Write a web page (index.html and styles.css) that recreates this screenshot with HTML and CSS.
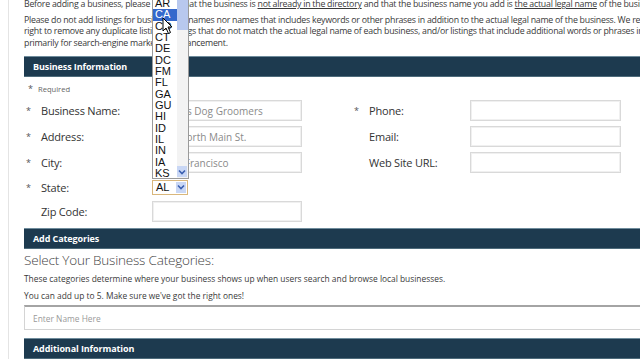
FILE: index.html
```html
<!DOCTYPE html>
<html lang="en">
<head>
    <meta charset="UTF-8">
    <title>Add a Business</title>
    <link rel="stylesheet" href="styles.css">
</head>
<body>
    <div class="page">
        <p class="intro intro-first">Before adding a business, please ensure that the business is <u>not already in the directory</u> and that the business name you add is <u>the actual legal name</u> of the business.</p>
        <p class="intro">Please do not add listings for business nicknames nor names that includes keywords or other phrases in addition to the actual legal name of the business. We reserve the<br>right to remove any duplicate listings, listings that do not match the actual legal name of each business, and/or listings that include additional words or phrases intended<br>primarily for search-engine marketing enhancement.</p>

        <div class="bar">Business Information</div>
        <p class="required"><span class="star">*</span> Required</p>

        <div class="fields">
            <span class="star">*</span>
            <label class="label">Business Name:</label>
            <input class="field" type="text" value="Max's Dog Groomers">
            <span></span>
            <span class="star">*</span>
            <label class="label">Phone:</label>
            <input class="field" type="text">

            <span class="star">*</span>
            <label class="label">Address:</label>
            <input class="field" type="text" value="10 North Main St.">
            <span></span>
            <span></span>
            <label class="label">Email:</label>
            <input class="field" type="text">

            <span class="star">*</span>
            <label class="label">City:</label>
            <input class="field" type="text" value="San Francisco">
            <span></span>
            <span></span>
            <label class="label">Web Site URL:</label>
            <input class="field" type="text">

            <span class="star">*</span>
            <label class="label">State:</label>
            <div class="state-cell">
                <div class="state-select">
                    <span>AL</span>
                    <span class="arrow-btn">
                        <svg width="8" height="6" viewBox="0 0 8 6"><path d="M1 1.5 L4 4.5 L7 1.5" fill="none" stroke="#3a5fb0" stroke-width="1.6"/></svg>
                    </span>
                </div>
            </div>
            <span></span><span></span><span></span><span></span>

            <span></span>
            <label class="label">Zip Code:</label>
            <input class="field" type="text">
            <span></span><span></span><span></span><span></span>
        </div>

        <div class="bar bar-cats">Add Categories</div>
        <h3 class="cat-title">Select Your Business Categories:</h3>
        <p class="cat-note">These categories determine where your business shows up when users search and browse local businesses.</p>
        <p class="cat-note cat-last">You can add up to 5. Make sure we've got the right ones!</p>
        <input class="cat-input" type="text" placeholder="Enter Name Here">

        <div class="bar bar-extra">Additional Information</div>

        <!-- open state list, drawn over the form -->
        <div class="state-list">
            <ul>
                <li>AR</li>
                <li class="picked">CA</li>
                <li>CO</li>
                <li>CT</li>
                <li>DE</li>
                <li>DC</li>
                <li>FM</li>
                <li>FL</li>
                <li>GA</li>
                <li>GU</li>
                <li>HI</li>
                <li>ID</li>
                <li>IL</li>
                <li>IN</li>
                <li>IA</li>
                <li>KS</li>
            </ul>
            <div class="scroll">
                <div class="thumb"></div>
                <div class="arrow-btn down">
                    <svg width="8" height="6" viewBox="0 0 8 6"><path d="M1 1.5 L4 4.5 L7 1.5" fill="none" stroke="#3a5fb0" stroke-width="1.6"/></svg>
                </div>
            </div>
        </div>
        <svg class="cursor" width="12" height="18" viewBox="0 0 12 18"><path d="M1 1 L1 14 L4 11 L6.5 16.5 L8.5 15.5 L6 10 L10 10 Z" fill="#fff" stroke="#000" stroke-width="1"/></svg>
    </div>
</body>
</html>
```

FILE: styles.css
```css
html, body {
    margin: 0;
    overflow: hidden;
    background: #fff;
}

body {
    font-family: "Open Sans", "Noto Sans", sans-serif;
    color: #3a3a3a;
}

.page {
    position: relative;
    width: 700px;
    min-height: 360px;
    margin-left: 8px;
    padding-left: 15px;
    border-left: 1px solid #e4e4e4;
}

.intro {
    margin: 0 0 4px 0;
    font-size: 8.8px;
    line-height: 11.5px;
    letter-spacing: -0.25px;
    white-space: nowrap;
}

.intro-first {
    margin-top: -1px;
}

.bar {
    height: 19px;
    margin-top: 7px;
    padding-left: 9px;
    background: #1d3a4f;
    border-top: 1px solid #6f8c9c;
    border-bottom: 1px solid #4e6b7b;
    color: #fff;
    font-size: 9px;
    font-weight: 700;
    line-height: 19px;
    letter-spacing: -0.1px;
}

.required {
    margin: 6px 0 5px 0;
    font-size: 7.6px;
    line-height: 12px;
    color: #666;
}

.required .star {
    margin: 0 3px 0 2px;
}

.star {
    padding-left: 2px;
    font-size: 9px;
    color: #555;
}

.fields {
    display: grid;
    grid-template-columns: 17px 111px 150px 50px 17px 101px 151px;
    grid-template-rows: 21px 21px 21px 18px 21px;
    row-gap: 5px;
    align-items: center;
}

.label {
    font-size: 11px;
    letter-spacing: -0.2px;
    color: #333;
}

.field {
    box-sizing: border-box;
    width: 100%;
    height: 21px;
    margin: 0;
    padding: 0 8px 0 12px;
    border: 1px solid #d9d9d9;
    box-shadow: inset 0 0 0 1px #f0f0f0;
    font-family: "Open Sans", sans-serif;
    font-size: 10px;
    color: #8a8a8a;
    outline: none;
}

.state-cell {
    display: flex;
    align-items: center;
}

.state-select {
    display: flex;
    align-items: center;
    justify-content: space-between;
    box-sizing: border-box;
    width: 36px;
    height: 15px;
    padding: 0 1px 0 3px;
    border: 1px solid #d9b77c;
    font-family: "Liberation Sans", Arial, sans-serif;
    font-size: 11px;
    color: #111;
}

.arrow-btn {
    display: flex;
    align-items: center;
    justify-content: center;
    width: 10px;
    height: 11px;
    background: #c9d7f5;
}

.bar-cats {
    margin-top: 6px;
}

.cat-title {
    margin: 1px 0 0 0;
    font-size: 13.5px;
    font-weight: 300;
    line-height: 20px;
    color: #444;
    letter-spacing: -0.2px;
}

.cat-note {
    margin: 3px 0 5px 0;
    font-size: 8.4px;
    line-height: 12px;
    color: #3a3a3a;
    white-space: nowrap;
}

.cat-note + .cat-note {
    margin-top: 0;
}

.cat-last {
    margin-bottom: 3px;
}

.cat-input {
    display: block;
    box-sizing: border-box;
    width: 100%;
    height: 25px;
    margin: 0;
    padding: 0 8px;
    border: 1px solid #d4d4d4;
    border-top: 2px solid #a4a4a4;
    font-family: "Open Sans", sans-serif;
    font-size: 8.4px;
    outline: none;
}

.cat-input::placeholder {
    color: #9a9a9a;
}

.bar-extra {
    margin-top: 8px;
}

/* open dropdown */
.state-list {
    position: absolute;
    left: 143px;
    top: -1px;
    display: flex;
    width: 35px;
    height: 180px;
    background: #fff;
    border: 1px solid #9a9a9a;
    border-top: none;
    overflow: hidden;
}

.state-list ul {
    flex: 1;
    margin: 0;
    padding: 0;
    list-style: none;
    font-family: "Liberation Sans", Arial, sans-serif;
    font-size: 11px;
    line-height: 11.35px;
    color: #111;
}

.state-list li {
    padding-left: 2px;
}

.state-list li.picked {
    background: #3468cc;
    color: #fff;
}

.scroll {
    position: relative;
    width: 11px;
    background: #f3f3f3;
}

.thumb {
    height: 32px;
    background: #b8c8ee;
}

.down {
    position: absolute;
    bottom: 1px;
    left: 0;
}

.cursor {
    position: absolute;
    left: 153px;
    top: 18px;
}
```
